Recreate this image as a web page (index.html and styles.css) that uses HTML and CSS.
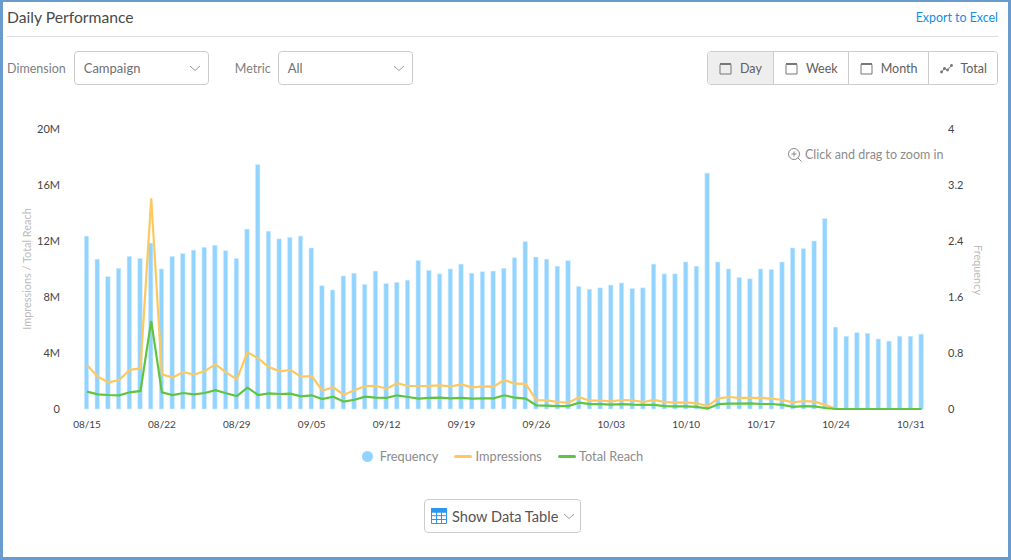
FILE: index.html
```html
<!DOCTYPE html>
<html lang="en">
<head>
  <meta charset="UTF-8">
  <meta name="viewport" content="width=device-width, initial-scale=1.0">
  <title>Daily Performance</title>
  <link rel="stylesheet" href="styles.css">
</head>
<body>
  <div class="panel">
    <div class="panel-header">
      <h2>Daily Performance</h2>
      <a class="export-link" href="#">Export to Excel</a>
    </div>

    <div class="controls">
      <div class="filters">
        <label class="filter-label">Dimension</label>
        <div class="select">
          <span>Campaign</span>
          <svg class="chevron" viewBox="0 0 12 7"><path d="M1 1l5 4.500L11 1"/></svg>
        </div>
        <label class="filter-label filter-metric">Metric</label>
        <div class="select">
          <span>All</span>
          <svg class="chevron" viewBox="0 0 12 7"><path d="M1 1l5 4.500L11 1"/></svg>
        </div>
      </div>

      <div class="segments">
        <button class="segment active">
          <svg class="seg-icon" viewBox="0 0 13 13"><path d="M1 2.500h11v9.500H1z"/><path class="heavy" d="M1 2h11"/></svg>
          Day
        </button>
        <button class="segment">
          <svg class="seg-icon" viewBox="0 0 13 13"><path d="M1 2.500h11v9.500H1z"/><path class="heavy" d="M1 2h11"/></svg>
          Week
        </button>
        <button class="segment">
          <svg class="seg-icon" viewBox="0 0 13 13"><path d="M1 2.500h11v9.500H1z"/><path class="heavy" d="M1 2h11"/></svg>
          Month
        </button>
        <button class="segment">
          <svg class="seg-icon trend" viewBox="0 0 13 13"><path d="M1.500 10l3-3.500 3 1.500 4-4.500"/><circle cx="1.500" cy="10" r="1.400"/><circle cx="4.500" cy="6.500" r="1.400"/><circle cx="7.500" cy="8" r="1.400"/><circle cx="11.500" cy="3.500" r="1.400"/></svg>
          Total
        </button>
      </div>
    </div>

    <div id="chart" class="chart"></div>

    <div class="legend">
      <div class="legend-item"><span class="legend-dot"></span>Frequency</div>
      <div class="legend-item"><span class="legend-line orange"></span>Impressions</div>
      <div class="legend-item"><span class="legend-line green"></span>Total Reach</div>
    </div>

    <div class="table-toggle">
      <button class="table-button">
        <svg class="table-icon" viewBox="0 0 16 16"><path class="table-head" d="M0.500 0.500h15v3.500h-15z"/><path d="M0.500 0.500h15v15h-15zM0.500 4h15M0.500 7.700h15M0.500 11.500h15M5.500 4v11.500M10.500 4v11.500"/></svg>
        Show Data Table
        <svg class="chevron" viewBox="0 0 12 7"><path d="M1 1l5 4.500L11 1"/></svg>
      </button>
    </div>
  </div>

  <script src="chart.js"></script>
</body>
</html>
```

FILE: styles.css
```css
* {
  box-sizing: border-box;
}
html, body {
  margin: 0;
  height: 100%;
}
body {
  font-family: Lato, "Open Sans", Arial, sans-serif;
  color: #555;
  background-color: white;
}
.panel {
  width: 1011px;
  height: 560px;
  border: 2px solid #6a9bcf;
  border-width: 2px 3px 3px 3px;
  padding: 0 10px 0 4px;
  overflow: hidden;
}
.panel-header {
  display: flex;
  justify-content: space-between;
  align-items: center;
  height: 35px;
  border-bottom: 1px solid #ddd;
  padding-bottom: 4px;
}
.panel-header h2 {
  margin: 0;
  font-size: 15.700px;
  font-weight: 400;
  color: #4a4a4a;
}
.export-link {
  color: #0d8fe8;
  font-size: 12.400px;
  text-decoration: none;
}
.controls {
  display: flex;
  justify-content: space-between;
  margin-top: 14px;
}
.filters {
  display: flex;
  align-items: center;
}
.filter-label {
  font-size: 12.500px;
  color: #808080;
}
.filter-metric {
  margin-left: 26px;
}
.select {
  display: flex;
  justify-content: space-between;
  align-items: center;
  width: 135px;
  height: 34px;
  margin-left: 8px;
  padding: 0 7px 0 9px;
  border: 1px solid #ccc;
  border-radius: 4px;
  font-size: 13px;
  color: #707070;
}
.filter-metric + .select {
  margin-left: 7px;
}
.chevron {
  flex-shrink: 0;
  width: 12px;
  height: 7px;
  fill: none;
  stroke: #999;
  stroke-width: 1;
}
.segments {
  display: flex;
  height: 34px;
  border: 1px solid #ccc;
  border-radius: 4px;
  overflow: hidden;
}
.segment {
  display: flex;
  align-items: center;
  gap: 8px;
  padding: 0 10px 0 11px;
  border: none;
  border-left: 1px solid #ccc;
  background-color: white;
  font-family: inherit;
  font-size: 12.500px;
  color: #606060;
}
.segment:first-child {
  border-left: none;
  padding-right: 11px;
}
.segment.active {
  background-color: #eee;
}
.seg-icon {
  width: 13px;
  height: 13px;
  fill: none;
  stroke: #777;
  stroke-width: 1;
}
.seg-icon .heavy {
  stroke-width: 2;
}
.seg-icon.trend circle {
  fill: #777;
  stroke: none;
}
.chart {
  height: 361px;
  margin-left: -4px;
  margin-right: -10px;
}
.chart svg {
  display: block;
}
.chart text {
  font-family: Lato, "Open Sans", Arial, sans-serif;
}
.axis-label {
  font-size: 11px;
  fill: #444;
}
.date-label {
  font-size: 10px;
  fill: #444;
}
.axis-title {
  font-size: 10.900px;
  fill: #bbb;
}
.zoom-hint {
  font-size: 12.500px;
  fill: #8c8c8c;
}
.zoom-icon {
  fill: none;
  stroke: #888;
  stroke-width: 1;
}
.bar {
  fill: #92d4ff;
  stroke: #cdebff;
  stroke-width: 0.6;
}
.impressions {
  fill: none;
  stroke: #fdc85f;
  stroke-width: 2.200;
}
.reach {
  fill: none;
  stroke: #5fc53f;
  stroke-width: 2.200;
}
.legend {
  display: flex;
  justify-content: center;
  gap: 16px;
  height: 20px;
  font-size: 12.800px;
  color: #8c8c8c;
}
.legend-item {
  display: flex;
  align-items: center;
  gap: 3px;
}
.legend-dot {
  width: 11px;
  height: 11px;
  margin-right: 4px;
  border-radius: 50%;
  background-color: #92d4ff;
}
.legend-line {
  width: 18px;
  height: 3px;
  border-radius: 2px;
}
.legend-line.orange {
  background-color: #fdc85f;
}
.legend-line.green {
  background-color: #5fc53f;
}
.table-toggle {
  display: flex;
  justify-content: center;
  margin-top: 33px;
}
.table-button {
  display: flex;
  align-items: center;
  gap: 5px;
  width: 157px;
  height: 34px;
  padding: 0 6px;
  border: 1px solid #ccc;
  border-radius: 4px;
  background-color: white;
  font-family: inherit;
  font-size: 14.600px;
  color: #555;
  white-space: nowrap;
}
.table-icon {
  flex-shrink: 0;
  width: 16px;
  height: 16px;
  fill: none;
  stroke: #2b97ee;
  stroke-width: 1;
}
.table-icon .table-head {
  fill: #2b97ee;
}
```

FILE: chart.js
```js
// Daily values from 08/15 to 11/01
const frequency = [
  2.47, 2.14, 1.89, 2.01, 2.18, 2.15, 2.37, 2.00, 2.18, 2.22, 2.27, 2.31, 2.34, 2.26, 2.15, 2.57, 3.49, 2.54, 2.43,
  2.45, 2.47, 2.30, 1.76, 1.70, 1.90, 1.94, 1.78, 1.97, 1.79, 1.81, 1.84, 2.12, 1.98, 1.93, 2.00, 2.07, 1.94, 1.96, 1.97, 2.01, 2.16, 2.39,
  2.17, 2.14, 2.04, 2.12, 1.75, 1.71, 1.73, 1.77, 1.80, 1.72, 1.73, 2.07, 1.93, 1.93, 2.10, 2.04, 3.37, 2.10, 2.00, 1.88, 1.86, 2.00,
  1.99, 2.10, 2.30, 2.29, 2.40, 2.72, 1.17, 1.04, 1.09, 1.08, 1.00, 0.97, 1.04, 1.04, 1.07
];
const impressions = [
  3.14, 2.31, 1.91, 2.07, 2.79, 2.91, 15.05, 2.48, 2.24, 2.64, 2.45, 2.71, 3.19, 2.62, 2.12, 4.05, 3.62, 3.00, 2.69,
  2.79, 2.31, 2.34, 1.31, 1.55, 1.02, 1.34, 1.64, 1.66, 1.45, 1.84, 1.64, 1.64, 1.66, 1.69, 1.62, 1.76, 1.55, 1.62, 1.59, 2.07, 1.81, 1.79,
  .64, .62, .5, .45, .84, .59, .59, .55, .64, .62, .5, .66, .5, .45, .48, .41, .21, .76, .86, .79, .79, .79, .74, .64, .48, .57, .52, .29,
  0, 0, 0, 0, 0, 0, 0, 0, 0
];
const reach = [
  1.24, 1.05, 1.00, .98, 1.19, 1.29, 6.29, 1.19, 1.00, 1.14, 1.05, 1.14, 1.34, 1.12, .93, 1.52, 1.00, 1.12, 1.07,
  1.09, .91, .98, .71, .88, .52, .66, .88, .81, .79, .98, .86, .74, .79, .81, .76, .79, .74, .76, .76, .98, .81, .74,
  .26, .24, .21, .21, .45, .34, .34, .31, .34, .31, .29, .29, .21, .19, .19, .16, .02, .34, .38, .38, .41, .36, .36, .29, .16, .21, .19, .07,
  0, 0, 0, 0, 0, 0, 0, 0, 0
];

const leftTicks = ['0', '4M', '8M', '12M', '16M', '20M'];
const rightTicks = ['0', '0.8', '1.6', '2.4', '3.2', '4'];
const dates = ['08/15', '08/22', '08/29', '09/05', '09/12', '09/19', '09/26', '10/03', '10/10', '10/17', '10/24', '10/31'];

// The chart box starts at y = 85 on the page
const chartTop = 85;
const baseY = 409 - chartTop;
const firstX = 86.5;
const stepX = 10.7;

const xAt = i => firstX + i * stepX;
const yLeft = v => baseY - v * 14;
const yRight = v => baseY - v * 70;

function linePoints(values) {
  return values.map((v, i) => `${(xAt(i) + 0.5).toFixed(1)},${yLeft(v).toFixed(1)}`).join(' ');
}

let svg = '<svg width="1005" height="361" viewBox="3 0 1005 361">';

frequency.forEach((v, i) => {
  const y = yRight(v);
  svg += `<rect class="bar" x="${(xAt(i) - 2.2).toFixed(1)}" y="${y.toFixed(1)}" width="4.4" height="${(baseY - y).toFixed(1)}"/>`;
});

svg += `<polyline class="impressions" points="${linePoints(impressions)}"/>`;
svg += `<polyline class="reach" points="${linePoints(reach)}"/>`;

leftTicks.forEach((label, i) => {
  svg += `<text class="axis-label" x="60" y="${baseY - i * 56 + 4}" text-anchor="end">${label}</text>`;
});
rightTicks.forEach((label, i) => {
  svg += `<text class="axis-label" x="948" y="${baseY - i * 56 + 4}">${label}</text>`;
});
dates.forEach((label, i) => {
  svg += `<text class="date-label" x="${(xAt(i * 7) + 0.5).toFixed(1)}" y="${baseY + 19}" text-anchor="middle">${label}</text>`;
});

svg += `<text class="axis-title" transform="translate(31 ${269 - chartTop}) rotate(-90)" text-anchor="middle">Impressions / Total Reach</text>`;
svg += `<text class="axis-title" transform="translate(974 ${270 - chartTop}) rotate(90)" text-anchor="middle">Frequency</text>`;

// Zoom hint over the top right of the plot
svg += `<g class="zoom-icon" transform="translate(788 ${148 - chartTop})">
  <circle cx="6" cy="6" r="5.500"/><path d="M10 10l3.500 3.500M3.500 6h5M6 3.500v5"/>
</g>`;
svg += `<text class="zoom-hint" x="805" y="${159 - chartTop}">Click and drag to zoom in</text>`;

svg += '</svg>';
document.getElementById('chart').innerHTML = svg;
```
